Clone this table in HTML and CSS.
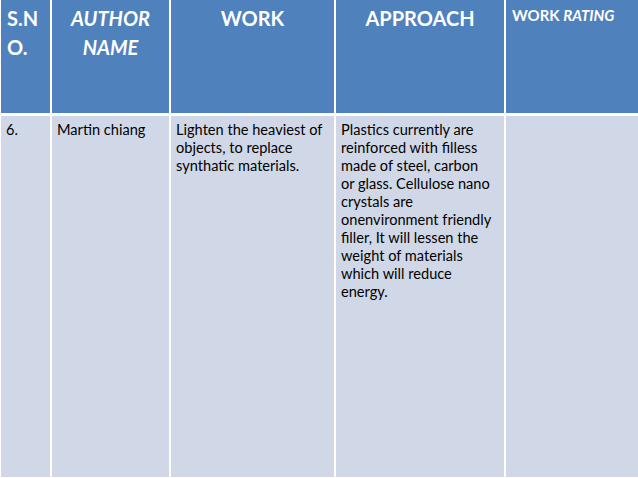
FILE: index.html
```html
<!DOCTYPE html>
<html>
<head>
<meta charset="utf-8">
<link rel="stylesheet" href="styles.css">
</head>
<body>
<div class="table">
  <div class="cell head sno">S.N O.</div>
  <div class="cell head center"><i>AUTHOR NAME</i></div>
  <div class="cell head center">WORK</div>
  <div class="cell head center">APPROACH</div>
  <div class="cell head small">WORK <i>RATING</i></div>
  <div class="cell body">6.</div>
  <div class="cell body">Martin chiang</div>
  <div class="cell body">Lighten the heaviest of objects, to replace synthatic materials.</div>
  <div class="cell body approach">Plastics currently are reinforced with filless made of steel, carbon or glass. Cellulose nano crystals are onenvironment friendly filler, It will lessen the weight of materials which will reduce energy.</div>
  <div class="cell body"></div>
</div>
</body>
</html>
```
FILE: styles.css
```css
html, body {
  margin: 0;
  padding: 0;
  width: 638px;
  height: 478px;
  overflow: hidden;
  background: #ffffff;
}
.table {
  display: grid;
  grid-template-columns: 49px 117px 163px 168px 1fr;
  grid-template-rows: 113px 1fr;
  column-gap: 2px;
  row-gap: 3px;
  width: 638px;
  height: 478px;
  box-sizing: border-box;
  padding: 0 0 1px 1px;
  background: #ffffff;
  font-family: Lato, "Open Sans", sans-serif;
}
.cell {
  box-sizing: border-box;
}
.head {
  background: #4f81bd;
  color: #ffffff;
  font-weight: bold;
  font-size: 20px;
  line-height: 29px;
  padding: 4px 6px;
}
.center {
  text-align: center;
}
.sno {
  padding-left: 6px;
  word-break: break-all;
}
.small {
  font-size: 15px;
  line-height: 20px;
  padding: 5px 6px;
}
.body {
  background: #d0d8e8;
  color: #000000;
  font-size: 14.6px;
  line-height: 18px;
  padding: 5px 5px;
}
.approach {
  padding-right: 11px;
}
```
